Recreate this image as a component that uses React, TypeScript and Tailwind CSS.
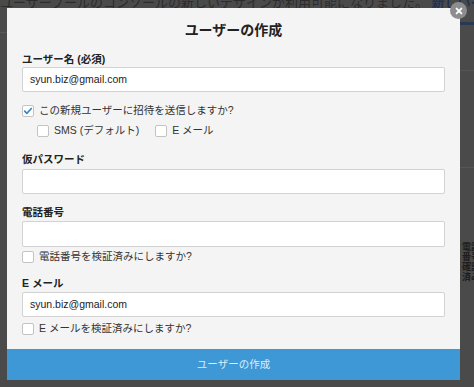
import React from 'react';

const font = { fontFamily: '"Liberation Sans", "Noto Sans CJK JP", sans-serif' };

function Box({ checked = false }: { checked?: boolean }) {
  return (
    <span className="w-[12px] h-[12px] shrink-0 bg-white border border-[#c3c3c3] rounded-[2px] flex items-center justify-center">
      {checked && (
        <svg viewBox="0 0 12 12" className="w-[10px] h-[10px]">
          <path d="M2 6.2l2.6 2.6L10 3" fill="none" stroke="#3b86c6" strokeWidth={2} strokeLinecap="round" strokeLinejoin="round" />
        </svg>
      )}
    </span>
  );
}

function Check({ label, checked, className = '' }: { label: string; checked?: boolean; className?: string }) {
  return (
    <label className={`flex items-center gap-[5px] h-[14px] text-[10.5px] text-[#333] ${className}`}>
      <Box checked={checked} />
      <span>{label}</span>
    </label>
  );
}

function Field({ value = '', h = 'h-[25px]', className = '' }: { value?: string; h?: string; className?: string }) {
  return (
    <div className={`${h} w-full bg-white border border-[#d2d2d2] rounded-[2px] flex items-center px-[7px] text-[10.5px] text-[#222] ${className}`}>
      {value}
    </div>
  );
}

function Label({ text, className = '' }: { text: string; className?: string }) {
  return <div className={`h-[16px] leading-[16px] text-[10.5px] font-bold text-[#222] ${className}`}>{text}</div>;
}

export default function App() {
  return (
    <div className="relative w-[474px] h-[387px] overflow-hidden bg-[#4a4a4a]" style={font}>
      {/* dimmed page behind */}
      <div className="absolute left-0 top-[-4px] whitespace-nowrap text-[13px] leading-[14px] text-[#2c2c2c]">
        ユーザープールのコンソールの新しいデザインが利用可能になりました。 <span className="text-[#1f3354] font-bold">新しいインターフェイス</span>
      </div>
      <div className="absolute left-[460px] top-[22px] w-[14px] h-[3px] bg-[#283a52]" />
      <div className="absolute left-[460px] top-[70px] w-[14px] h-px bg-[#555]" />
      <div className="absolute left-[460px] top-[167px] w-[14px] h-px bg-[#555]" />
      <div className="absolute left-0 top-[32px] w-[7px] h-px bg-[#585858]" />
      <div className="absolute left-[462px] top-[242px] w-[40px] flex flex-col whitespace-nowrap text-[9px] leading-[10px] text-[#1c1c1c] font-bold">
        <span>電話</span>
        <span>番号</span>
        <span>確認</span>
        <span>済み</span>
      </div>

      {/* modal */}
      <div className="absolute left-[7px] top-[8px] w-[453px] h-[372px] bg-[#f4f4f4] flex flex-col">
        <div className="mt-[11px] h-[22px] leading-[22px] text-center text-[14px] font-bold text-[#222]">ユーザーの作成</div>
        <div className="px-[15px] flex flex-col">
          <Label text="ユーザー名 (必須)" className="mt-[10px]" />
          <Field value="syun.biz@gmail.com" />
          <Check label="この新規ユーザーに招待を送信しますか?" checked className="mt-[12px]" />
          <div className="flex items-center gap-[16px] mt-[6px] pl-[15px]">
            <Check label="SMS (デフォルト)" />
            <Check label="E メール" />
          </div>
          <Label text="仮パスワード" className="mt-[13px]" />
          <Field className="mt-[2px]" />
          <Label text="電話番号" className="mt-[10px]" />
          <Field h="h-[26px]" className="mt-[1px]" />
          <Check label="電話番号を検証済みにしますか?" className="mt-[3px]" />
          <Label text="E メール" className="mt-[11px]" />
          <Field value="syun.biz@gmail.com" className="mt-[1px]" />
          <Check label="E メールを検証済みにしますか?" className="mt-[5px]" />
        </div>
        <button className="mt-auto h-[31px] w-full bg-[#3f98d6] text-[10.5px] text-[#dcedf9]">ユーザーの作成</button>
      </div>

      {/* close */}
      <div className="absolute left-[450px] top-[2px] w-[17px] h-[17px] rounded-full bg-[#8d8d8d] flex items-center justify-center">
        <svg viewBox="0 0 10 10" className="w-[8px] h-[8px]">
          <path d="M2 2l6 6M8 2l-6 6" stroke="#fff" strokeWidth={2.4} strokeLinecap="round" />
        </svg>
      </div>
    </div>
  );
}
